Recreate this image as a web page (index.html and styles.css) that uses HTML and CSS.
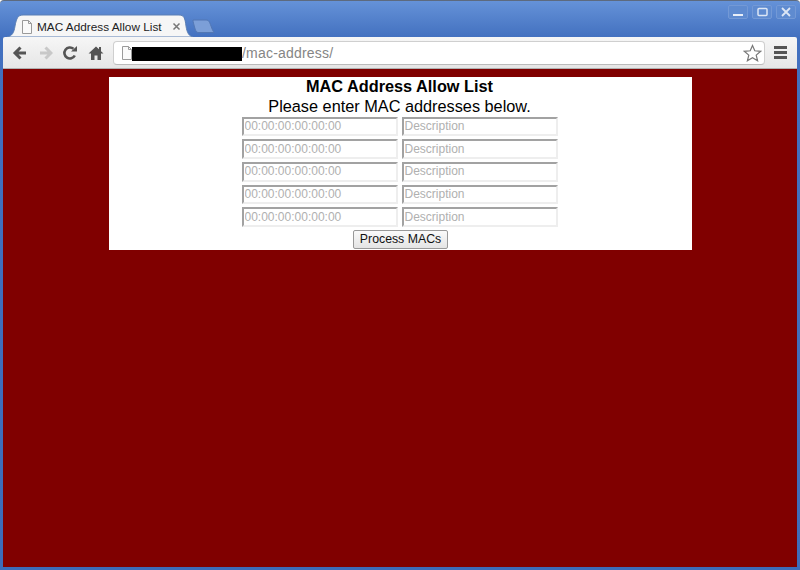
FILE: index.html
```html
<!DOCTYPE html>
<html lang="en">

<head>
  <meta charset="UTF-8">
  <title>MAC Address Allow List</title>
  <link rel="stylesheet" href="styles.css">
</head>

<body>
  <div class="window">
    <div class="titlebar">
      <div class="tab">
        <svg class="tab-shape" width="186" height="23" viewBox="0 0 186 23">
          <path d="M0 23C5 22 7 19 8 12 9.500 4 11 1 16 1H172C177 1 178 4 179 12 180 19 182 22 186 23Z" fill="#f6f6f6" stroke="#5a7fb5" stroke-width="1"/>
        </svg>
        <svg class="page-icon" width="12" height="15" viewBox="0 0 12 15">
          <path d="M1.500.5H7.500L10.500 3.500V13.500H1.500Z" fill="#fafafa" stroke="#9a9a9a"/>
          <path d="M7.500.5V3.500H10.500" fill="none" stroke="#9a9a9a"/>
        </svg>
        <span class="tab-title">MAC Address Allow List</span>
        <svg class="tab-close" width="9" height="9" viewBox="0 0 9 9">
          <path d="M1.500 1.500L7.500 7.500M7.500 1.500L1.500 7.500" stroke="#777" stroke-width="1.500"/>
        </svg>
      </div>
      <svg class="new-tab" width="24" height="15" viewBox="0 0 24 15">
        <path d="M2 1H15C18 1 18.500 3 20 7 21 10 22 12 23 13.500H7C5 13.500 4.500 11 3.500 8 2.800 5 2 3 2 1Z" fill="#7c9fd8" stroke="#5277b4"/>
      </svg>
      <div class="controls">
        <div class="control">
          <svg width="10" height="10" viewBox="0 0 10 10"><path d="M0 7H10V9H0Z" fill="#e8eef8"/></svg>
        </div>
        <div class="control">
          <svg width="11" height="10" viewBox="0 0 11 10"><rect x="1" y="1.500" width="9" height="7" rx="1" fill="none" stroke="#dce6f5" stroke-width="1.500"/></svg>
        </div>
        <div class="control">
          <svg width="10" height="10" viewBox="0 0 10 10"><path d="M1 1L9 9M9 1L1 9" stroke="#dce6f5" stroke-width="1.800"/></svg>
        </div>
      </div>
    </div>

    <div class="toolbar">
      <svg class="tool" width="16" height="16" viewBox="0 0 16 16">
        <path d="M15 8H4.500M9.500 2.500L4 8L9.500 13.500" fill="none" stroke="#555" stroke-width="3"/>
      </svg>
      <svg class="tool" width="16" height="16" viewBox="0 0 16 16">
        <path d="M3 8H13.500M8.500 2.500L14 8L8.500 13.500" fill="none" stroke="#c8c8c8" stroke-width="3"/>
      </svg>
      <svg class="tool" width="16" height="16" viewBox="0 0 16 16">
        <path d="M12.800 10.500A5.500 5.500 0 1 1 11.500 3.800" fill="none" stroke="#555" stroke-width="2.600"/>
        <path d="M9 6.500H15V1Z" fill="#555"/>
      </svg>
      <svg class="tool" width="16" height="16" viewBox="0 0 16 16">
        <path d="M8 1.500L0.500 8.500H3V15H6.500V10.500H9.500V15H13V8.500H15.500L13 6.200V2H11V4.300Z" fill="#555"/>
      </svg>
      <div class="omnibox">
        <svg class="page-icon" width="12" height="15" viewBox="0 0 12 15">
          <path d="M1.500.5H7.500L10.500 3.500V13.500H1.500Z" fill="#fafafa" stroke="#9a9a9a"/>
          <path d="M7.500.5V3.500H10.500" fill="none" stroke="#9a9a9a"/>
        </svg>
        <span class="redacted"></span>
        <span class="url">/mac-address/</span>
        <svg class="star" width="19" height="18" viewBox="0 0 19 18">
          <path d="M9.500 1.500L11.800 6.800L17.700 7.300L13.200 11.100L14.600 16.800L9.500 13.800L4.400 16.800L5.800 11.100L1.300 7.300L7.200 6.800Z" fill="#fff" stroke="#777" stroke-width="1.200"/>
        </svg>
      </div>
      <div class="menu"><span></span><span></span><span></span></div>
    </div>

    <div class="page">
      <form class="card">
        <div class="heading">MAC Address Allow List</div>
        <div class="subheading">Please enter MAC addresses below.</div>
        <div class="row">
          <input type="text" placeholder="00:00:00:00:00:00">
          <input type="text" placeholder="Description">
        </div>
        <div class="row">
          <input type="text" placeholder="00:00:00:00:00:00">
          <input type="text" placeholder="Description">
        </div>
        <div class="row">
          <input type="text" placeholder="00:00:00:00:00:00">
          <input type="text" placeholder="Description">
        </div>
        <div class="row">
          <input type="text" placeholder="00:00:00:00:00:00">
          <input type="text" placeholder="Description">
        </div>
        <div class="row">
          <input type="text" placeholder="00:00:00:00:00:00">
          <input type="text" placeholder="Description">
        </div>
        <button type="button" class="submit">Process MACs</button>
      </form>
    </div>
  </div>
</body>

</html>
```

FILE: styles.css
```css
html,
body {
  margin: 0;
  padding: 0;
}

body {
  width: 800px;
  height: 570px;
  overflow: hidden;
  font-family: "Liberation Sans", Arial, sans-serif;
}

.window {
  display: flex;
  flex-direction: column;
  box-sizing: border-box;
  width: 800px;
  height: 570px;
  padding: 0 3px 3px;
  background: linear-gradient(#6592d8 0, #4270bf 37px, #3d6cb9 100%);
  border-top: 1px solid #5d6a7e;
  border-radius: 4px 4px 0 0;
}

.titlebar {
  display: flex;
  align-items: flex-end;
  height: 36px;
  flex-shrink: 0;
}

.tab {
  position: relative;
  display: flex;
  align-items: center;
  width: 186px;
  height: 23px;
  margin-left: 4px;
  box-sizing: border-box;
  padding: 2px 0 0 14px;
}

.tab-shape {
  position: absolute;
  top: 0;
  left: 0;
}

.page-icon {
  margin-top: 2px;
}

.tab .page-icon,
.tab-title,
.tab-close {
  position: relative;
}

.tab-title {
  margin-left: 4px;
  font-size: 11.800px;
  color: #222;
  white-space: nowrap;
}

.tab-close {
  margin-left: 10px;
}

.new-tab {
  margin: 0 0 3px -2px;
}

.controls {
  display: flex;
  gap: 4px;
  margin: 0 0 18px auto;
  padding-right: 1px;
}

.control {
  display: flex;
  align-items: center;
  justify-content: center;
  width: 18px;
  height: 12px;
  background: #5f8bd0;
  border: 1px solid #7399d6;
  border-radius: 2px;
}

.toolbar {
  display: flex;
  align-items: center;
  height: 32px;
  flex-shrink: 0;
  padding-left: 8px;
  background: linear-gradient(#f6f6f6, #e6e6e6);
  border-radius: 2px 2px 0 0;
  border-bottom: 1px solid #b0b0b0;
  box-sizing: border-box;
}

.tool {
  margin-right: 9.500px;
}

.omnibox {
  display: flex;
  align-items: center;
  width: 652px;
  height: 24px;
  box-sizing: border-box;
  padding: 0 2px 0 7px;
  background: #fff;
  border: 1px solid #cfcfcf;
  border-bottom-color: #bbb;
  border-radius: 4px;
}

.redacted {
  width: 110px;
  height: 14px;
  margin: 3px 0 0 -1px;
  background: #000;
}

.url {
  font-size: 14px;
  letter-spacing: 0.200px;
  color: #858585;
}

.star {
  margin-left: auto;
}

.menu {
  display: flex;
  flex-direction: column;
  gap: 2px;
  margin-left: 9px;
}

.menu span {
  width: 13px;
  height: 3px;
  background: #555;
}

.page {
  flex: 1;
  background: #800000;
}

.card {
  display: flex;
  flex-direction: column;
  align-items: center;
  box-sizing: border-box;
  width: 583px;
  height: 173px;
  margin: 8px 0 0 106px;
  padding-right: 2px;
  background: #fff;
  color: #000;
}

.heading {
  font-size: 16.300px;
  font-weight: bold;
  line-height: 19px;
  color: #000;
}

.subheading {
  font-size: 16.300px;
  line-height: 20px;
  margin-bottom: 0.600px;
}

.row {
  display: flex;
  gap: 4px;
  margin-bottom: 3px;
}

.row input {
  width: 156px;
  height: 19.670px;
  box-sizing: border-box;
  padding: 0 1px 1px 1px;
  font-family: "Liberation Sans", Arial, sans-serif;
  font-size: 12px;
  background: #fff;
  border: 2px solid;
  border-color: #a2a2a2 #eeeeee #eeeeee #a2a2a2;
  outline: none;
}

.row input::placeholder {
  color: #b0b0b0;
  opacity: 1;
}

.submit {
  width: 95px;
  height: 19px;
  margin: 0 0 0 2px;
  padding: 0;
  font-family: "Liberation Sans", Arial, sans-serif;
  font-size: 12.300px;
  color: #111;
  background: linear-gradient(#fafafa, #e4e4e4);
  border: 1px solid #999;
  border-radius: 2px;
}
```
